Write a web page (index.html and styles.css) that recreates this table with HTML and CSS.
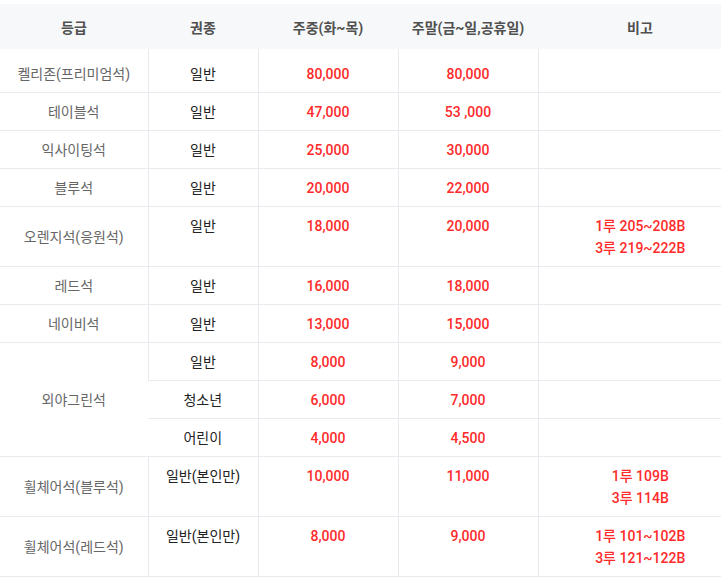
FILE: index.html
```html
<!DOCTYPE html>
<html lang="ko">
<head>
<meta charset="utf-8">
<link rel="stylesheet" href="styles.css">
</head>
<body>
<table class="price">
  <colgroup>
    <col class="c-grade"><col class="c-type"><col class="c-wd"><col class="c-we"><col class="c-note">
  </colgroup>
  <thead>
    <tr><th>등급</th><th>권종</th><th>주중(화~목)</th><th>주말(금~일,공휴일)</th><th>비고</th></tr>
  </thead>
  <tbody>
    <tr class="first"><td class="grade">켈리존(프리미엄석)</td><td class="type">일반</td><td class="num">80,000</td><td class="num">80,000</td><td class="num"></td></tr>
    <tr><td class="grade">테이블석</td><td class="type">일반</td><td class="num">47,000</td><td class="num">53 ,000</td><td class="num"></td></tr>
    <tr><td class="grade">익사이팅석</td><td class="type">일반</td><td class="num">25,000</td><td class="num">30,000</td><td class="num"></td></tr>
    <tr><td class="grade">블루석</td><td class="type">일반</td><td class="num">20,000</td><td class="num">22,000</td><td class="num"></td></tr>
    <tr><td class="grade">오렌지석(응원석)</td><td class="type">일반</td><td class="num">18,000</td><td class="num">20,000</td><td class="num">1루 205~208B<br>3루 219~222B</td></tr>
    <tr><td class="grade">레드석</td><td class="type">일반</td><td class="num">16,000</td><td class="num">18,000</td><td class="num"></td></tr>
    <tr><td class="grade">네이비석</td><td class="type">일반</td><td class="num">13,000</td><td class="num">15,000</td><td class="num"></td></tr>
    <tr><td class="grade" rowspan="3">외야그린석</td><td class="type">일반</td><td class="num">8,000</td><td class="num">9,000</td><td class="num"></td></tr>
    <tr><td class="type">청소년</td><td class="num">6,000</td><td class="num">7,000</td><td class="num"></td></tr>
    <tr><td class="type">어린이</td><td class="num">4,000</td><td class="num">4,500</td><td class="num"></td></tr>
    <tr><td class="grade">휠체어석(블루석)</td><td class="type">일반(본인만)</td><td class="num">10,000</td><td class="num">11,000</td><td class="num">1루 109B<br>3루 114B</td></tr>
    <tr><td class="grade">휠체어석(레드석)</td><td class="type">일반(본인만)</td><td class="num">8,000</td><td class="num">9,000</td><td class="num">1루 101~102B<br>3루 121~122B</td></tr>
  </tbody>
</table>
</body>
</html>
```
FILE: styles.css
```css
html, body {
  margin: 0;
  padding: 0;
  overflow: hidden;
  background: #ffffff;
}
body {
  padding-top: 4px;
  font-family: Roboto, "Noto Sans CJK KR", sans-serif;
  font-size: 14px;
}
.price {
  width: 742px;
  table-layout: fixed;
  border-collapse: collapse;
  border-spacing: 0;
}
.c-grade { width: 148px; }
.c-type { width: 110px; }
.c-wd { width: 140px; }
.c-we { width: 140px; }
.c-note { width: 204px; }

.price th {
  height: 45px;
  padding: 0;
  background: #f7f8fa;
  color: #505050;
  font-weight: 700;
  font-size: 14px;
  text-align: center;
  vertical-align: middle;
}
.price td {
  padding: 8px 0 7px;
  line-height: 22px;
  text-align: center;
  vertical-align: top;
  border-top: 1px solid #e9e9ef;
  border-bottom: 1px solid #e9e9ef;
  border-left: 1px solid #e9e9ef;
}
.price tbody tr:first-child td { border-top: none; }
.price td:first-child { border-left: none; }
.price td.grade {
  vertical-align: middle;
  color: #666666;
  font-weight: 400;
  border-left: none;
}
.price td.type {
  color: #222222;
  font-weight: 400;
}
.price td.num {
  color: #ff2a2a;
  font-weight: 500;
}
.price tr.first td {
  padding-top: 14px;
  padding-bottom: 7px;
}
```
